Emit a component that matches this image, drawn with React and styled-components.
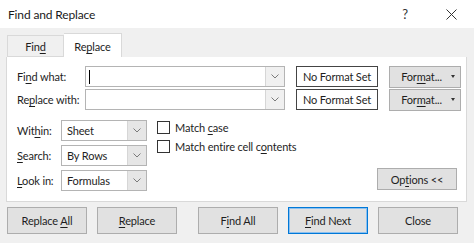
import React from 'react'
import styled, { createGlobalStyle } from 'styled-components'

const GlobalStyle = createGlobalStyle`
  html, body {
    margin: 0;
    padding: 0;
    background: #ffffff;
  }
  body {
    font-family: Lato, "Noto Sans", sans-serif;
    font-size: 11px;
    letter-spacing: -0.15px;
    color: #1e1e1e;
  }
  u {
    text-underline-offset: 2px;
  }
`

const Dialog = styled.div`
  width: 474px;
  height: 243px;
  display: flex;
  flex-direction: column;
  background: #f0f0f0;
  overflow: hidden;
`

const TitleBar = styled.div`
  height: 28px;
  flex: none;
  display: flex;
  align-items: center;
  justify-content: space-between;
  padding-left: 8px;
  background: #ffffff;
`

const Title = styled.span`
  font-size: 12px;
  color: #1a1a1a;
`

const TitleButtons = styled.div`
  display: flex;
  align-items: center;
  height: 100%;
`

const TitleButton = styled.div`
  width: 46px;
  height: 100%;
  display: flex;
  align-items: center;
  justify-content: center;
  font-size: 13px;
  color: #333;
`

const TabStrip = styled.div`
  height: 29px;
  flex: none;
  display: flex;
  align-items: flex-end;
  padding-left: 7px;
`

const Tab = styled.div`
  width: ${p => (p.$active ? '58px' : '57px')};
  height: ${p => (p.$active ? '25px' : '22px')};
  box-sizing: border-box;
  display: flex;
  align-items: center;
  justify-content: center;
  background: ${p => (p.$active ? '#ffffff' : '#f0f0f0')};
  border: 1px solid #d9d9d9;
  border-bottom: ${p => (p.$active ? 'none' : '1px solid #d9d9d9')};
  border-left: ${p => (p.$active ? 'none' : '1px solid #d9d9d9')};
  margin-bottom: ${p => (p.$active ? '-1px' : '0')};
  padding-top: ${p => (p.$active ? '0' : '1px')};
`

const Panel = styled.div`
  margin-left: 6px;
  width: 461px;
  height: 145px;
  box-sizing: border-box;
  background: #ffffff;
  border: 1px solid #d9d9d9;
  border-top: none;
  padding: 9px 0 0 10px;
  display: flex;
  flex-direction: column;
`

const FieldRow = styled.div`
  display: flex;
  align-items: center;
  height: 21px;
  margin-bottom: 2px;
`

const Label = styled.span`
  width: ${p => p.$width || '68px'};
  flex: none;
  white-space: nowrap;
`

const Combo = styled.div`
  width: ${p => p.$width};
  height: 21px;
  box-sizing: border-box;
  display: flex;
  border: 1px solid #b4b4b4;
  background: #ffffff;
`

const ComboText = styled.div`
  flex: 1;
  display: flex;
  align-items: center;
  padding-left: ${p => (p.$caret ? '3px' : '5px')};
`

const Caret = styled.span`
  width: 1px;
  height: 14px;
  background: #000;
`

const ComboArrow = styled.div`
  width: 18px;
  flex: none;
  display: flex;
  align-items: center;
  justify-content: center;
  background: ${p => (p.$filled ? '#e6e6e6' : '#f0f0f0')};
  border-left: 1px solid #d6d6d6;
`

const FormatBox = styled.div`
  width: 82px;
  height: 21px;
  box-sizing: border-box;
  margin-left: 11px;
  border: 1px solid #444;
  display: flex;
  align-items: center;
  justify-content: center;
  background: #ffffff;
`

const GrayButton = styled.div`
  width: ${p => p.$width || '80px'};
  height: ${p => p.$height || '22px'};
  box-sizing: border-box;
  margin-left: ${p => p.$left || '0'};
  background: #e1e1e1;
  border: ${p => (p.$focus ? '1px solid #0078d7' : '1px solid #adadad')};
  box-shadow: ${p => (p.$focus ? 'inset 0 0 0 1px #8cc0ef' : 'none')};
  display: flex;
  align-items: center;
  justify-content: center;
  flex: none;
  white-space: nowrap;
`

const FormatButton = styled(GrayButton)`
  justify-content: flex-end;
  padding-right: 5px;
  gap: 9px;
`

const SmallArrow = styled.span`
  width: 0;
  height: 0;
  border-left: 2px solid transparent;
  border-right: 2px solid transparent;
  border-top: 3px solid #333;
`

const OptionsArea = styled.div`
  display: flex;
  margin-top: 8px;
`

const SelectCol = styled.div`
  display: flex;
  flex-direction: column;
  gap: 4px;
`

const SelectRow = styled.div`
  display: flex;
  align-items: center;
  height: 21px;
`

const CheckCol = styled.div`
  display: flex;
  flex-direction: column;
  gap: 6px;
  margin-left: 10px;
  padding-top: 1px;
`

const CheckRow = styled.label`
  display: flex;
  align-items: center;
  gap: 5px;
  height: 13px;
  white-space: nowrap;
`

const Box = styled.span`
  width: 13px;
  height: 13px;
  box-sizing: border-box;
  border: 1px solid #333;
  background: #fff;
`

const OptionsWrap = styled.div`
  margin-left: auto;
  margin-right: 9px;
  align-self: flex-end;
  margin-bottom: 1px;
`

const Footer = styled.div`
  display: flex;
  padding: 5px 0 0 7px;
`

const Chevron = () => (
  <svg width="8" height="5" viewBox="0 0 8 5">
    <path d="M0.5 0.5 L4 4 L7.5 0.5" fill="none" stroke="#7a7a7a" strokeWidth="1" />
  </svg>
)

const CloseIcon = () => (
  <svg width="11" height="11" viewBox="0 0 11 11">
    <path d="M0.5 0.5 L10.5 10.5 M10.5 0.5 L0.5 10.5" stroke="#333" strokeWidth="1" />
  </svg>
)

const selects = [
  { label: <>Wit<u>h</u>in:</>, value: 'Sheet' },
  { label: <><u>S</u>earch:</>, value: 'By Rows' },
  { label: <><u>L</u>ook in:</>, value: 'Formulas' },
]

const footerButtons = [
  { text: <>Replace <u>A</u>ll</>, left: '0' },
  { text: <><u>R</u>eplace</>, left: '10px' },
  { text: <>F<u>i</u>nd All</>, left: '21px' },
  { text: <><u>F</u>ind Next</>, left: '10px', focus: true },
  { text: 'Close', left: '10px' },
]

export default function App() {
  return (
    <>
      <GlobalStyle />
      <Dialog>
        <TitleBar>
          <Title>Find and Replace</Title>
          <TitleButtons>
            <TitleButton>?</TitleButton>
            <TitleButton><CloseIcon /></TitleButton>
          </TitleButtons>
        </TitleBar>
        <TabStrip>
          <Tab><span>Fin<u>d</u></span></Tab>
          <Tab $active><span>Re<u>p</u>lace</span></Tab>
        </TabStrip>
        <Panel>
          <FieldRow>
            <Label>Fi<u>n</u>d what:</Label>
            <Combo $width="200px">
              <ComboText $caret><Caret /></ComboText>
              <ComboArrow><Chevron /></ComboArrow>
            </Combo>
            <FormatBox>No Format Set</FormatBox>
            <FormatButton $width="72px" $left="11px">
              <span>For<u>m</u>at...</span>
              <SmallArrow />
            </FormatButton>
          </FieldRow>
          <FieldRow>
            <Label>Re<u>p</u>lace with:</Label>
            <Combo $width="200px">
              <ComboText />
              <ComboArrow><Chevron /></ComboArrow>
            </Combo>
            <FormatBox>No Format Set</FormatBox>
            <FormatButton $width="72px" $left="11px">
              <span>For<u>m</u>at...</span>
              <SmallArrow />
            </FormatButton>
          </FieldRow>
          <OptionsArea>
            <SelectCol>
              {selects.map((s, i) => (
                <SelectRow key={i}>
                  <Label $width="44px">{s.label}</Label>
                  <Combo $width="86px">
                    <ComboText>{s.value}</ComboText>
                    <ComboArrow $filled><Chevron /></ComboArrow>
                  </Combo>
                </SelectRow>
              ))}
            </SelectCol>
            <CheckCol>
              <CheckRow><Box /><span>Match <u>c</u>ase</span></CheckRow>
              <CheckRow><Box /><span>Match entire cell c<u>o</u>ntents</span></CheckRow>
            </CheckCol>
            <OptionsWrap>
              <GrayButton $width="80px" $height="22px">
                <span>Op<u>t</u>ions &lt;&lt;</span>
              </GrayButton>
            </OptionsWrap>
          </OptionsArea>
        </Panel>
        <Footer>
          {footerButtons.map((b, i) => (
            <GrayButton key={i} $width="80px" $height="27px" $left={b.left} $focus={b.focus}>
              <span>{b.text}</span>
            </GrayButton>
          ))}
        </Footer>
      </Dialog>
    </>
  )
}
